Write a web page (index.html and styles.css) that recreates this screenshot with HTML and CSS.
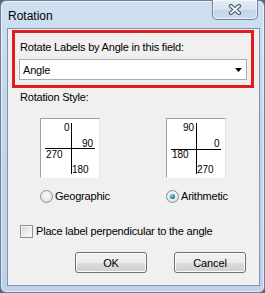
FILE: index.html
```html
<!DOCTYPE html>
<html lang="en">
<head>
    <meta charset="UTF-8">
    <title>Rotation</title>
    <link rel="stylesheet" href="styles.css">
</head>
<body>
    <div class="window">
        <div class="titlebar">
            <span class="title">Rotation</span>
            <button class="close" title="Close">
                <svg width="16" height="11" viewBox="0 0 16 11">
                    <path d="M4 2 L12 9 M12 2 L4 9" stroke="#4b5665" stroke-width="4.2" stroke-linecap="round"/>
                    <path d="M4 2 L12 9 M12 2 L4 9" stroke="#f3f5f8" stroke-width="2" stroke-linecap="round"/>
                </svg>
            </button>
        </div>

        <div class="client">
            <div class="field-box">
                <div class="field-label">Rotate Labels by Angle in this field:</div>
                <div class="select">
                    <span>Angle</span>
                    <svg width="7" height="4" viewBox="0 0 7 4"><path d="M0 0 H7 L3.5 4 Z" fill="#000"/></svg>
                </div>
            </div>

            <div class="section-label">Rotation Style:</div>

            <div class="styles">
                <div class="style-option">
                    <div class="diagram">
                        <svg width="58" height="58" viewBox="0 0 58 58">
                            <line x1="30.5" y1="4" x2="30.5" y2="55" stroke="#000"/>
                            <line x1="4" y1="29.5" x2="54" y2="29.5" stroke="#000"/>
                            <text x="23" y="12">0</text>
                            <text x="41" y="28">90</text>
                            <text x="5" y="39">270</text>
                            <text x="31" y="54">180</text>
                        </svg>
                    </div>
                    <label class="radio"><span class="radio-dot"></span>Geographic</label>
                </div>
                <div class="style-option">
                    <div class="diagram">
                        <svg width="58" height="58" viewBox="0 0 58 58">
                            <line x1="29.5" y1="4" x2="29.5" y2="55" stroke="#000"/>
                            <line x1="4" y1="30.5" x2="54" y2="30.5" stroke="#000"/>
                            <text x="16" y="12">90</text>
                            <text x="47" y="28">0</text>
                            <text x="5" y="39">180</text>
                            <text x="30" y="54">270</text>
                        </svg>
                    </div>
                    <label class="radio"><span class="radio-dot checked"></span>Arithmetic</label>
                </div>
            </div>

            <label class="check"><span class="box"></span>Place label perpendicular to the angle</label>

            <div class="buttons">
                <button class="btn">OK</button>
                <button class="btn">Cancel</button>
            </div>
        </div>
    </div>
</body>
</html>
```

FILE: styles.css
```css
html, body {
    margin: 0;
}
body {
    background: #5b6570;
    font-family: "Liberation Sans", Arial, sans-serif;
    font-size: 11px;
    color: #000;
}
.window {
    width: 265px;
    height: 293px;
    box-sizing: border-box;
    border: 1px solid #6c8096;
    border-radius: 6px;
    background: linear-gradient(180deg, #cfe0f2 0%, #c2d6ec 40%, #bdd2ea 100%);
    box-shadow: inset 0 0 0 1px rgba(255, 255, 255, 0.55);
    display: flex;
    flex-direction: column;
}
.titlebar {
    height: 27px;
    display: flex;
    align-items: flex-start;
    padding-left: 7px;
}
.title {
    font-size: 12px;
    line-height: 14px;
    margin-top: 8px;
}
.close {
    margin: -1px 6px 0 auto;
    width: 46px;
    height: 20px;
    padding: 0;
    border: 1px solid #6f8198;
    border-top: none;
    border-radius: 0 0 5px 5px;
    background: linear-gradient(180deg, #e6eef7 0%, #d3e0ee 50%, #c3d4e7 51%, #cddcee 100%);
    box-shadow: inset 0 0 0 1px rgba(255, 255, 255, 0.6);
    display: flex;
    align-items: center;
    justify-content: center;
}
.close svg {
    display: block;
}
.client {
    flex: 1;
    margin: 0 4px 6px 6px;
    border: 1px solid #8095ab;
    background: #f0f0f0;
    display: flex;
    flex-direction: column;
    letter-spacing: -0.2px;
}
.field-box {
    margin: 1px 5px 0 4px;
    border: 3px solid #e31c1c;
    padding: 7px 4px 5px 4px;
}
.field-label {
    line-height: 14px;
    padding-left: 1px;
}
.select {
    margin-top: 5px;
    height: 21px;
    box-sizing: border-box;
    border: 1px solid #abadb3;
    background: #fff;
    display: flex;
    align-items: center;
    justify-content: space-between;
    padding: 0 4px 0 3px;
}
.select svg {
    display: block;
}
.section-label {
    margin: 2px 0 0 12px;
    line-height: 14px;
}
.styles {
    display: grid;
    grid-template-columns: 126px 1fr;
    padding-left: 32px;
    margin-top: 14px;
}
.style-option {
    display: flex;
    flex-direction: column;
    align-items: flex-start;
}
.diagram {
    width: 58px;
    height: 58px;
    background: #fff;
    border: 1px solid #fcfcfc;
    border-top-color: #a0a0a0;
    border-left-color: #a0a0a0;
    border-right-color: #e3e3e3;
}
.diagram svg {
    display: block;
}
.diagram text {
    font-family: "Liberation Sans", Arial, sans-serif;
    font-size: 10px;
    letter-spacing: 0;
    fill: #000;
}
.radio {
    margin-top: 11px;
    line-height: 14px;
    display: flex;
    align-items: center;
    gap: 2px;
}
.radio-dot {
    width: 13px;
    height: 13px;
    box-sizing: border-box;
    border-radius: 50%;
    border: 1px solid #8e8f8f;
    background: radial-gradient(circle at 50% 40%, #fbfbfb 0%, #e9e9e9 55%, #d2d2d2 100%);
    position: relative;
}
.radio-dot.checked::after {
    content: "";
    position: absolute;
    left: 3px;
    top: 3px;
    width: 5px;
    height: 5px;
    border-radius: 50%;
    background: radial-gradient(circle at 40% 35%, #9fe0f8 0%, #2a8cc4 45%, #0e4b78 100%);
}
.check {
    margin: 21px 0 0 12px;
    line-height: 14px;
    display: flex;
    align-items: center;
    gap: 3px;
}
.box {
    width: 13px;
    height: 13px;
    box-sizing: border-box;
    border: 1px solid #8e8f8f;
    background: linear-gradient(135deg, #cfd3d8 0%, #eeeeee 60%, #fafafa 100%);
    box-shadow: inset 0 0 0 1px #f4f4f4;
}
.buttons {
    display: flex;
    justify-content: flex-end;
    gap: 27px;
    padding-right: 13px;
    margin-top: 14px;
}
.btn {
    width: 72px;
    height: 21px;
    padding: 0;
    border: 1px solid #707070;
    border-radius: 3px;
    background: linear-gradient(180deg, #f2f2f2 0%, #ebebeb 50%, #dddddd 51%, #cfcfcf 100%);
    box-shadow: inset 0 0 0 1px #fcfcfc;
    font-family: "Liberation Sans", Arial, sans-serif;
    font-size: 11px;
    letter-spacing: -0.1px;
    color: #000;
}
```
